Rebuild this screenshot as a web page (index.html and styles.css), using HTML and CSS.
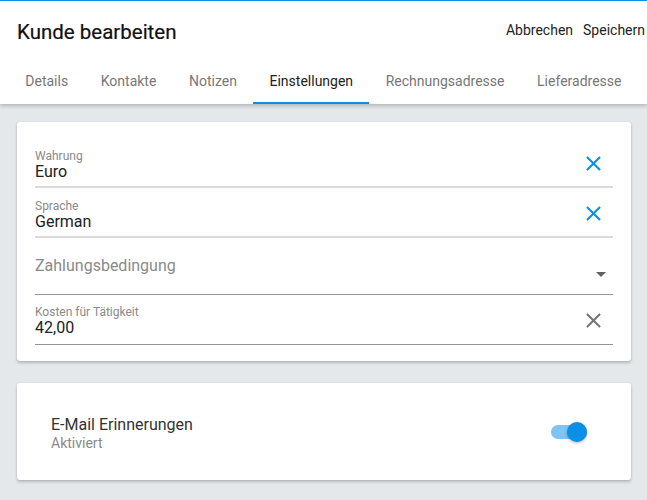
FILE: index.html
```html
<!DOCTYPE html>
<html lang="de">
<head>
<meta charset="utf-8">
<title>Kunde bearbeiten</title>
<link rel="stylesheet" href="styles.css">
</head>
<body>
<header class="header">
  <div class="title-row">
    <h1 class="title">Kunde bearbeiten</h1>
    <div class="actions">
      <button class="action">Abbrechen</button>
      <button class="action">Speichern</button>
    </div>
  </div>
  <nav class="tabs">
    <div class="tab">Details</div>
    <div class="tab">Kontakte</div>
    <div class="tab">Notizen</div>
    <div class="tab active">Einstellungen</div>
    <div class="tab">Rechnungsadresse</div>
    <div class="tab">Lieferadresse</div>
  </nav>
</header>

<main class="content">
  <section class="card form-card">
    <div class="field light">
      <div class="field-text">
        <div class="label">Wahrung</div>
        <div class="value">Euro</div>
      </div>
      <svg class="clear blue" viewBox="0 0 24 24"><path d="M19 6.41L17.59 5 12 10.59 6.41 5 5 6.41 10.59 12 5 17.59 6.41 19 12 13.41 17.59 19 19 17.59 13.41 12z"/></svg>
    </div>
    <div class="field light">
      <div class="field-text">
        <div class="label">Sprache</div>
        <div class="value">German</div>
      </div>
      <svg class="clear blue" viewBox="0 0 24 24"><path d="M19 6.41L17.59 5 12 10.59 6.41 5 5 6.41 10.59 12 5 17.59 6.41 19 12 13.41 17.59 19 19 17.59 13.41 12z"/></svg>
    </div>
    <div class="field select">
      <div class="placeholder">Zahlungsbedingung</div>
      <span class="arrow"></span>
    </div>
    <div class="field dark">
      <div class="field-text">
        <div class="label">Kosten für Tätigkeit</div>
        <div class="value">42,00</div>
      </div>
      <svg class="clear gray" viewBox="0 0 24 24"><path d="M19 6.41L17.59 5 12 10.59 6.41 5 5 6.41 10.59 12 5 17.59 6.41 19 12 13.41 17.59 19 19 17.59 13.41 12z"/></svg>
    </div>
  </section>

  <section class="card toggle-card">
    <div class="toggle-text">
      <div class="toggle-title">E-Mail Erinnerungen</div>
      <div class="toggle-sub">Aktiviert</div>
    </div>
    <div class="switch">
      <span class="track"></span>
      <span class="thumb"></span>
    </div>
  </section>
</main>
</body>
</html>
```
FILE: styles.css
```css
html, body {
  margin: 0;
  padding: 0;
}
body {
  background: #e5e8eb;
  font-family: Roboto, "Liberation Sans", Arial, sans-serif;
  color: #212121;
  width: 647px;
  height: 500px;
  overflow: hidden;
}
.header {
  background: #fff;
  border-top: 1px solid #0a8fe6;
  box-shadow: 0 2px 4px rgba(0, 0, 0, 0.22);
  position: relative;
  z-index: 1;
}
.title-row {
  height: 55px;
  display: flex;
  align-items: center;
  justify-content: space-between;
  padding-left: 17px;
}
.title {
  margin: 0;
  font-size: 20.5px;
  font-weight: 400;
  color: #111;
  position: relative;
  top: 3px;
  -webkit-text-stroke: 0.2px #111;
}
.actions {
  display: flex;
  gap: 10px;
  margin-right: 2px;
  position: relative;
  top: 1px;
}
.action {
  border: 0;
  background: none;
  padding: 0;
  font-family: inherit;
  font-size: 14px;
  color: #222;
}
.tabs {
  display: flex;
  padding-left: 9px;
  height: 48px;
}
.tab {
  padding: 3px 16.3px 0;
  display: flex;
  align-items: center;
  font-size: 14px;
  color: #777;
  border-bottom: 2px solid transparent;
  box-sizing: border-box;
}
.tab.active {
  color: #212121;
  border-bottom-color: #0a8fe6;
}
.content {
  padding: 18px 16px 0 17px;
  display: flex;
  flex-direction: column;
  gap: 22px;
}
.card {
  background: #fff;
  border-radius: 3px;
  box-shadow: 0 2px 3px rgba(0, 0, 0, 0.2), 0 0 2px rgba(0, 0, 0, 0.1);
}
.form-card {
  padding: 16px 18px;
}
.field {
  display: flex;
  align-items: flex-start;
  box-sizing: border-box;
}
.field.light {
  height: 50px;
  padding-top: 11px;
  border-bottom: 2px solid #dadada;
}
.field.dark {
  height: 50px;
  padding-top: 10px;
  border-bottom: 1px solid #949494;
}
.field-text {
  flex: 1;
}
.label {
  font-size: 12px;
  line-height: 14px;
  color: #8a8a8a;
}
.value {
  font-size: 16px;
  line-height: 18px;
  color: #222;
}
.clear {
  width: 25px;
  height: 25px;
  margin-right: 7px;
  margin-top: 2px;
}
.clear.blue { fill: #0a8fe6; }
.clear.gray { fill: #757575; margin-top: 3px; }
.field.select {
  height: 57px;
  padding-top: 18px;
  border-bottom: 1px solid #949494;
}
.placeholder {
  flex: 1;
  font-size: 16px;
  line-height: 20px;
  color: #8a8a8a;
}
.arrow {
  width: 0;
  height: 0;
  border-left: 5px solid transparent;
  border-right: 5px solid transparent;
  border-top: 5px solid #616161;
  margin-top: 16px;
  margin-right: 7px;
}
.toggle-card {
  height: 97px;
  box-sizing: border-box;
  display: flex;
  align-items: center;
  padding: 0 44px 0 34px;
}
.toggle-text {
  flex: 1;
  margin-top: 3px;
}
.toggle-title {
  font-size: 16px;
  line-height: 20px;
  color: #333;
}
.toggle-sub {
  font-size: 14px;
  line-height: 16px;
  color: #8a8a8a;
}
.switch {
  position: relative;
  width: 36px;
  height: 20px;
}
.track {
  position: absolute;
  left: 0;
  top: 3px;
  width: 36px;
  height: 14px;
  border-radius: 7px;
  background: #7fc4f4;
}
.thumb {
  position: absolute;
  right: 0;
  top: 0;
  width: 20px;
  height: 20px;
  border-radius: 50%;
  background: #0a8fe6;
  box-shadow: 0 1px 3px rgba(0, 0, 0, 0.3);
}
```
